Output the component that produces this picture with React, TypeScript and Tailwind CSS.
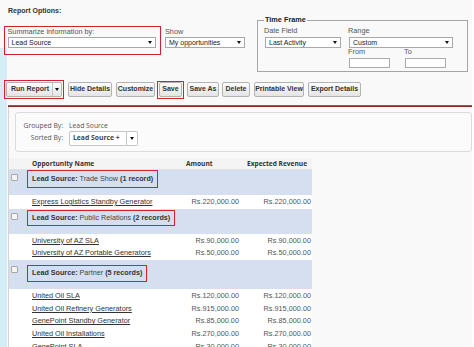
import React from "react";

const Arrow = () => (
  <svg width="4" height="3" viewBox="0 0 4 3" className="shrink-0">
    <path d="M0 0H4L2 3Z" fill="#111" />
  </svg>
);

interface SelectProps {
  className: string;
  value: string;
}

const FakeSelect = ({ className, value }: SelectProps) => (
  <div
    className={`h-[11px] bg-white border border-[#a9a9a9] flex items-center justify-between pl-[3px] pr-[3px] text-[7px] leading-none text-[#222] ${className}`}
  >
    <span>{value}</span>
    <Arrow />
  </div>
);

interface ButtonProps {
  className: string;
  label: string;
}

const Btn = ({ className, label }: ButtonProps) => (
  <div
    className={`h-[15px] shrink-0 flex items-center justify-center rounded-[2px] border border-[#b3b3b3] bg-linear-to-b from-[#fdfdfd] to-[#e4e4e4] text-[7px] font-bold text-[#333] ${className}`}
  >
    {label}
  </div>
);

interface Detail {
  name: string;
  amount: string;
}

interface Group {
  source: string;
  count: string;
  rowClass: string;
  boxClass: string;
  checkClass: string;
  details: Detail[];
}

const groups: Group[] = [
  {
    source: "Trade Show",
    count: "(1 record)",
    rowClass: "h-[26px]",
    boxClass: "mt-0 h-[18px]",
    checkClass: "mt-[4px]",
    details: [{ name: "Express Logistics Standby Generator", amount: "Rs.220,000.00" }],
  },
  {
    source: "Public Relations",
    count: "(2 records)",
    rowClass: "h-[26px]",
    boxClass: "mt-[1.5px] h-[16px]",
    checkClass: "mt-[4.5px]",
    details: [
      { name: "University of AZ SLA", amount: "Rs.90,000.00" },
      { name: "University of AZ Portable Generators", amount: "Rs.50,000.00" },
    ],
  },
  {
    source: "Partner",
    count: "(5 records)",
    rowClass: "h-[30px]",
    boxClass: "mt-[5px] h-[17px]",
    checkClass: "mt-[5.5px]",
    details: [
      { name: "United Oil SLA", amount: "Rs.120,000.00" },
      { name: "United Oil Refinery Generators", amount: "Rs.915,000.00" },
      { name: "GenePoint Standby Generator", amount: "Rs.85,000.00" },
      { name: "United Oil Installations", amount: "Rs.270,000.00" },
      { name: "GenePoint SLA", amount: "Rs.30,000.00" },
    ],
  },
];

const redBox = "border-[1.5px] border-[#d4212d]";

export default function App() {
  return (
    <div className="w-[474px] h-[347px] overflow-hidden flex bg-white font-['Liberation_Sans',Arial,sans-serif] text-[#333]">
      {/* left strip */}
      <div className="w-[7px] shrink-0 flex flex-col">
        <div className="h-[48px] bg-[#f9f9f9]" />
        <div className="flex-1 bg-[#d6ecf6]" />
      </div>

      <div className="w-[465px] shrink-0 bg-[#f9f9f9] flex flex-col">
        {/* report options */}
        <div className="flex h-[72px]">
          <div className="w-[250px] shrink-0">
            <div className="pt-[7px] pl-[1px] h-[15px] text-[7px] leading-[8px] font-bold text-[#333]">
              Report Options:
            </div>
            <div className="mt-[11px] flex">
              <div className={`-ml-[3px] w-[157px] h-[29px] ${redBox} pl-[2.5px] pt-[0.5px]`}>
                <div className="text-[7.3px] leading-[8px] text-[#555]">Summarize information by:</div>
                <FakeSelect className="mt-[1px] w-[148px]" value="Lead Source" />
              </div>
              <div className="ml-[4px] pt-[2px]">
                <div className="text-[7.3px] leading-[8px] text-[#555]">Show</div>
                <FakeSelect className="mt-[1px] w-[80px]" value="My opportunities" />
              </div>
            </div>
          </div>

          <fieldset className="mt-[16px] w-[211px] h-[56px] border border-[#a6a6a6] px-[6px]">
            <legend className="px-[1px] text-[7.3px] leading-[8px] font-bold text-[#222]">Time Frame</legend>
            <div className="flex pt-[3px]">
              <div className="w-[84px] shrink-0">
                <div className="text-[7.3px] leading-[8px] text-[#555]">Date Field</div>
                <FakeSelect className="mt-[2px] ml-[1px] w-[76px]" value="Last Activity" />
              </div>
              <div>
                <div className="text-[7.3px] leading-[8px] text-[#555]">Range</div>
                <FakeSelect className="mt-[2px] ml-[1px] w-[104px]" value="Custom" />
                <div className="flex">
                  <div className="w-[56px]">
                    <div className="text-[7.3px] leading-[8px] text-[#555]">From</div>
                    <div className="mt-[2px] ml-[1px] w-[41px] h-[10px] bg-white border border-[#aaa]" />
                  </div>
                  <div>
                    <div className="text-[7.3px] leading-[8px] text-[#555]">To</div>
                    <div className="mt-[2px] ml-[1px] w-[41px] h-[10px] bg-white border border-[#aaa]" />
                  </div>
                </div>
              </div>
            </div>
          </fieldset>
        </div>

        {/* buttons */}
        <div className="mt-[8px] h-[19px] flex items-center">
          <div className={`-ml-[3px] w-[60px] h-[19px] ${redBox} flex items-center justify-center shrink-0`}>
            <div className="w-[56px] h-[15px] flex items-center rounded-[2px] border border-[#b3b3b3] bg-linear-to-b from-[#fdfdfd] to-[#e4e4e4] text-[7px] font-bold text-[#333]">
              <span className="pl-[4px] w-[45px]">Run Report</span>
              <span className="h-full border-l border-[#c4c4c4]" />
              <span className="flex-1 flex justify-center">
                <Arrow />
              </span>
            </div>
          </div>
          <Btn className="ml-[4px] w-[44px]" label="Hide Details" />
          <Btn className="ml-[4px] w-[39px]" label="Customize" />
          <div className={`ml-[2px] w-[27px] h-[18px] ${redBox} flex items-center justify-center shrink-0`}>
            <Btn className="w-[23px] h-[14px]" label="Save" />
          </div>
          <Btn className="ml-[3px] w-[32px]" label="Save As" />
          <Btn className="ml-[3px] w-[28px]" label="Delete" />
          <Btn className="ml-[4px] w-[50px]" label="Printable View" />
          <Btn className="ml-[4px] w-[53px]" label="Export Details" />
        </div>

        {/* red separator */}
        <div className="mt-[6px] ml-[1px] h-[2px] border-t border-[#d8383c] bg-[#8a2a2a]" />

        {/* report body */}
        <div className="ml-[1px] flex-1 border-l border-[#d4d4d4] overflow-hidden">
          <div className="mt-[5px] ml-[6px] h-[40px] border border-[#dcdcdc] rounded-[3px] bg-[#fbfbfb] pt-[9px] font-['Open_Sans',sans-serif] text-[6.8px] text-[#555]">
            <div className="flex items-center h-[8px] leading-[8px]">
              <span className="w-[47px] text-right">Grouped By:</span>
              <span className="ml-[6px]">Lead Source</span>
            </div>
            <div className="flex items-center mt-[1px]">
              <span className="w-[47px] text-right">Sorted By:</span>
              <div className="ml-[6px] h-[15px] w-[58px] flex items-center pl-[3px] border border-[#c5c5c5] rounded-l-[2px] bg-white font-bold text-[#444] whitespace-nowrap">
                Lead Source +
              </div>
              <div className="h-[15px] w-[11px] flex items-center justify-center border border-l-0 border-[#c5c5c5] rounded-r-[2px] bg-white">
                <Arrow />
              </div>
            </div>
          </div>

          {/* table */}
          <div className="mt-[6px] w-[303px] overflow-hidden">
            <div className="w-[303px] grid grid-cols-[18px_156px_58px_71px] h-[12px] items-center bg-[#f4f4f4] border-b border-[#e2e2e2] font-['Open_Sans',sans-serif] text-[6.6px] font-bold text-[#333]">
              <span />
              <span className="pl-[5px]">Opportunity Name</span>
              <span className="pl-[3px]">Amount</span>
              <span className="pl-[6px] whitespace-nowrap">Expected Revenue</span>
            </div>

            {groups.map((g) => (
              <div key={g.source} className="w-[303px]">
                <div className={`w-[303px] flex items-start bg-[#d6dff0] border-b border-white ${g.rowClass}`}>
                  <div className="w-[18px] shrink-0 pl-[2px]">
                    <div className={`w-[7px] h-[7px] border border-[#a8a8a8] rounded-[1px] bg-[#f4f4f4] ${g.checkClass}`} />
                  </div>
                  <div className={`flex items-center px-[4px] text-[7.2px] text-[#333] whitespace-nowrap ${redBox} ${g.boxClass}`}>
                    <span className="font-bold">Lead Source:</span>
                    <span className="ml-[2px] text-[#444]">{g.source}</span>
                    <span className="ml-[2px] font-bold">{g.count}</span>
                  </div>
                </div>
                {g.details.map((d) => (
                  <div
                    key={d.name}
                    className="w-[303px] grid grid-cols-[18px_156px_58px_71px] h-[12.7px] items-center bg-white text-[7.3px]"
                  >
                    <span />
                    <span className="pl-[5px] underline text-[7.3px] text-[#333] whitespace-nowrap">{d.name}</span>
                    <span className="pr-[2px] text-right text-[#555]">{d.amount}</span>
                    <span className="pr-[1px] text-right text-[#555]">{d.amount}</span>
                  </div>
                ))}
              </div>
            ))}
          </div>
        </div>
      </div>

      <div className="flex-1 bg-white" />
    </div>
  );
}
